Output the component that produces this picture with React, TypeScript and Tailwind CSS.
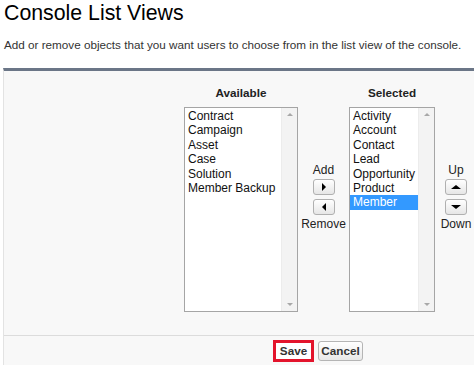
const available = ["Contract", "Campaign", "Asset", "Case", "Solution", "Member Backup"];
const selected = ["Activity", "Account", "Contact", "Lead", "Opportunity", "Product", "Member"];

function ListBox({ items, width, active }: { items: string[]; width: string; active?: string }) {
  return (
    <div className={`flex h-[205px] ${width} border border-[#a5a5a5] bg-white`}>
      <ul className="flex-1 pt-[1px] text-[12px] leading-[14.4px] text-[#111]">
        {items.map((item) => (
          <li
            key={item}
            className={
              item === active ? "bg-[#3399ff] pl-[3px] text-white" : "pl-[3px]"
            }
          >
            {item}
          </li>
        ))}
      </ul>
      <div className="flex w-[16px] flex-col items-center justify-between border-l border-[#ececec] bg-[#f3f3f3] py-[5px]">
        <span className="h-0 w-0 border-x-[3px] border-b-[3px] border-x-transparent border-b-[#a8a8a8]" />
        <span className="h-0 w-0 border-x-[3px] border-t-[3px] border-x-transparent border-t-[#a8a8a8]" />
      </div>
    </div>
  );
}

function ArrowButton({ dir }: { dir: "left" | "right" | "up" | "down" }) {
  const tri = {
    right: "border-y-[4px] border-l-[4px] border-y-transparent border-l-black",
    left: "border-y-[4px] border-r-[4px] border-y-transparent border-r-black",
    up: "border-x-[5px] border-b-[4px] border-x-transparent border-b-black",
    down: "border-x-[5px] border-t-[4px] border-x-transparent border-t-black",
  }[dir];
  return (
    <div className="flex h-[16px] w-[22px] items-center justify-center rounded-[3px] border border-[#b0b0b0] bg-gradient-to-b from-white to-[#e6e6e6]">
      <span className={`h-0 w-0 ${tri}`} />
    </div>
  );
}

function MoveColumn({ top, bottom, first, second }: { top: string; bottom: string; first: "left" | "right" | "up" | "down"; second: "left" | "right" | "up" | "down" }) {
  return (
    <div className="flex flex-col items-center pt-[77px] text-[12px] leading-[14px] text-[#222]">
      <span>{top}</span>
      <div className="mt-[2px] flex flex-col gap-[4px]">
        <ArrowButton dir={first} />
        <ArrowButton dir={second} />
      </div>
      <span className="mt-[2px]">{bottom}</span>
    </div>
  );
}

export default function App() {
  return (
    <div className="h-[365px] w-[474px] overflow-hidden bg-white font-['Liberation_Sans',Arial,sans-serif]">
      <h1 className="pl-[4px] pt-[1px] text-[21.3px] leading-[24px] text-black">Console List Views</h1>
      <p className="mt-[13px] pl-[4px] text-[11.7px] leading-[14px] text-[#333]">
        Add or remove objects that you want users to choose from in the list view of the console.
      </p>

      <div className="ml-[3px] mt-[16px] h-[300px] w-[520px] border-l border-t-[3px] border-l-[#e3e3e3] border-t-[#6b7687] bg-[#f8f8f8]">
        <div className="flex items-start pl-[180px] pt-[15px]">
          <div className="w-[114px]">
            <h2 className="mb-[7px] text-center text-[11.7px] font-bold leading-[14px] text-[#222]">Available</h2>
            <ListBox items={available} width="w-[114px]" />
          </div>
          <div className="w-[51px]">
            <MoveColumn top="Add" bottom="Remove" first="right" second="left" />
          </div>
          <div className="w-[86px]">
            <h2 className="mb-[7px] text-center text-[11.7px] font-bold leading-[14px] text-[#222]">Selected</h2>
            <ListBox items={selected} width="w-[86px]" active="Member" />
          </div>
          <div className="w-[42px]">
            <MoveColumn top="Up" bottom="Down" first="up" second="down" />
          </div>
        </div>

        <div className="mt-[23px] flex items-start gap-[4px] border-t border-[#dcdcdc] pl-[269px] pt-[4px]">
          <div className="w-[41px] border-[3px] border-[#e3142c] bg-white text-center text-[11.7px] font-bold leading-[16px] text-[#333]">
            Save
          </div>
          <div className="mt-[1px] w-[45px] rounded-[3px] border border-[#b5b5b5] bg-gradient-to-b from-white to-[#e8e8e8] text-center text-[11.7px] font-bold leading-[18px] text-[#333]">
            Cancel
          </div>
        </div>
      </div>
    </div>
  );
}
